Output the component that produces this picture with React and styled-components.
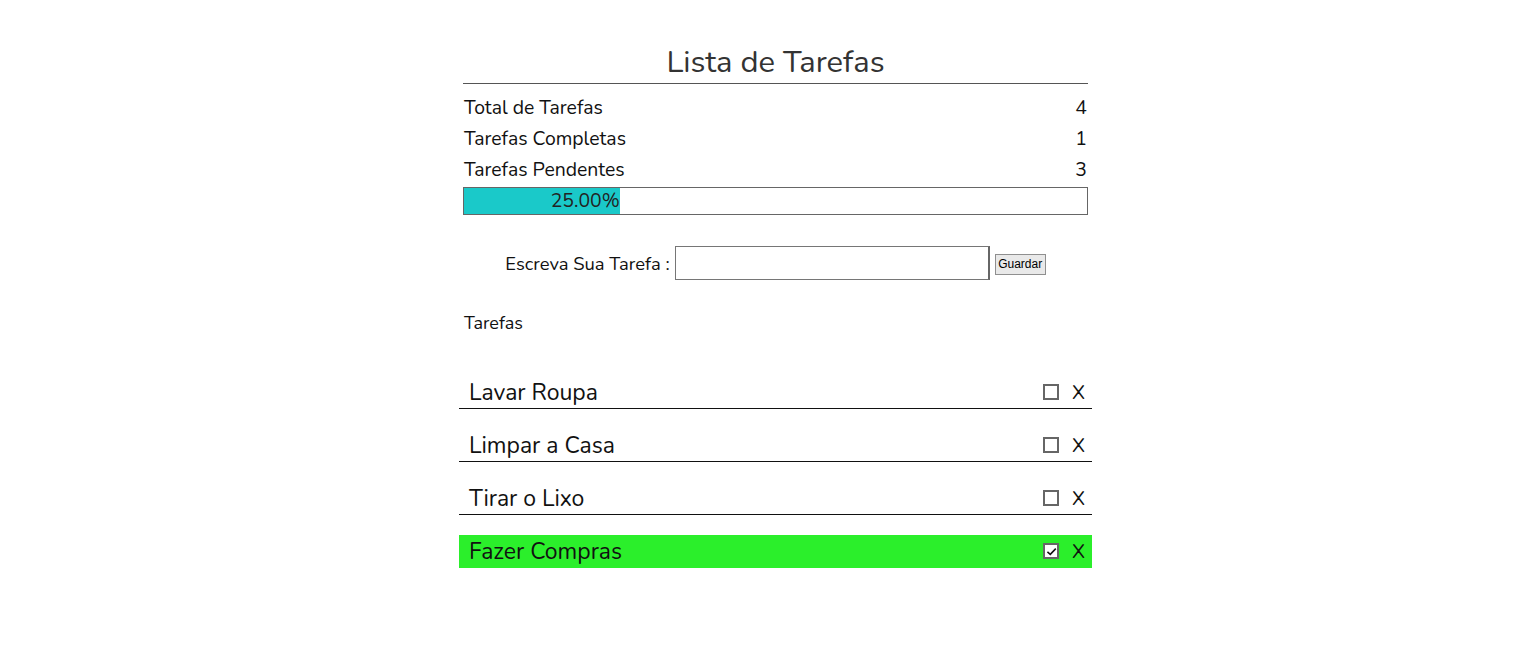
import React, { useState } from "react";
import styled, { createGlobalStyle } from "styled-components";

const Global = createGlobalStyle`
  html, body { margin: 0; padding: 0; background: #fff; }
  body { font-family: "Nunito", "Lato", "Noto Sans", sans-serif; color: #111; }
`;

const Page = styled.div`
  display: flex;
  justify-content: center;
  padding: 42px 0 0 17px;
`;

const Column = styled.div`
  width: 633px;
  display: flex;
  flex-direction: column;
  align-items: center;
`;

const Panel = styled.div`
  width: 625px;
  display: flex;
  flex-direction: column;
`;

const Title = styled.h1`
  margin: 0;
  font-size: 31px;
  font-weight: 400;
  line-height: 41px;
  color: #333;
  text-align: center;
  border-bottom: 1px solid #555;
  padding-bottom: 0;
`;

const Stats = styled.div`
  margin-top: 8px;
  display: flex;
  flex-direction: column;
`;

const StatRow = styled.div`
  display: flex;
  justify-content: space-between;
  font-size: 19.4px;
  line-height: 31px;
  padding: 0 1px;
`;

const Progress = styled.div`
  margin-top: 2px;
  height: 26px;
  border: 1px solid #666;
  display: flex;
`;

const Fill = styled.div`
  background: #1ac9c9;
  height: 100%;
  font-size: 19.4px;
  line-height: 26px;
  text-align: right;
  color: #222;
  white-space: nowrap;
`;

const Form = styled.form`
  margin-top: 31px;
  display: flex;
  align-items: center;
  justify-content: center;
  gap: 5px;
`;

const Label = styled.label`
  font-size: 18.4px;
  color: #111;
`;

const Input = styled.input`
  width: 310px;
  height: 30px;
  border: 1px solid #767676;
  border-right: 2px solid #666;
  padding: 1px;
  box-sizing: content-box;
  outline: none;
`;

const Button = styled.button`
  width: 51px;
  height: 21px;
  font-family: "Liberation Sans", Arial, sans-serif;
  font-size: 12px;
  padding: 0;
  background: #e9e9e9;
  border: 1px solid #8f8f8f;
  border-radius: 0;
  color: #000;
  margin-top: 2px;
`;

const SectionLabel = styled.div`
  margin-top: 31px;
  font-size: 18px;
  line-height: 24px;
  padding-left: 1px;
`;

const List = styled.ul`
  list-style: none;
  margin: 41px 0 0;
  padding: 0;
  width: 633px;
  display: flex;
  flex-direction: column;
  gap: 20px;
`;

const Item = styled.li`
  height: 32px;
  display: flex;
  align-items: center;
  padding: 0 7px 0 10px;
  background: ${(p) => (p.$done ? "#2bef2b" : "transparent")};
  border-bottom: 1px solid ${(p) => (p.$done ? "#2bef2b" : "#111")};
`;

const ItemText = styled.span`
  flex: 1;
  font-size: 23px;
  color: #111;
`;

const Check = styled.span`
  width: 12px;
  height: 12px;
  border: 2px solid #666;
  background: #fff;
  display: inline-flex;
  align-items: center;
  justify-content: center;
  margin-right: 13px;
`;

const Remove = styled.span`
  font-size: 20px;
  color: #111;
  cursor: pointer;
`;

const tasks = [
  { name: "Lavar Roupa", done: false },
  { name: "Limpar a Casa", done: false },
  { name: "Tirar o Lixo", done: false },
  { name: "Fazer Compras", done: true },
];

export default function App() {
  const [value, setValue] = useState("");
  const total = tasks.length;
  const done = tasks.filter((t) => t.done).length;
  const pct = (done / total) * 100;
  return (
    <>
      <Global />
      <Page>
        <Column>
          <Panel>
            <Title>Lista de Tarefas</Title>
            <Stats>
              <StatRow><span>Total de Tarefas</span><span>{total}</span></StatRow>
              <StatRow><span>Tarefas Completas</span><span>{done}</span></StatRow>
              <StatRow><span>Tarefas Pendentes</span><span>{total - done}</span></StatRow>
            </Stats>
            <Progress>
              <Fill style={{ width: `${pct}%` }}>{pct.toFixed(2)}%</Fill>
            </Progress>
            <Form onSubmit={(e) => e.preventDefault()}>
              <Label>Escreva Sua Tarefa :</Label>
              <Input value={value} onChange={(e) => setValue(e.target.value)} />
              <Button type="submit">Guardar</Button>
            </Form>
            <SectionLabel>Tarefas</SectionLabel>
          </Panel>
          <List>
            {tasks.map((t) => (
              <Item key={t.name} $done={t.done}>
                <ItemText>{t.name}</ItemText>
                <Check>
                  {t.done && (
                    <svg width="11" height="11" viewBox="0 0 10 10">
                      <path d="M1.3 5.3 L3.9 7.6 L8.9 2.4" fill="none" stroke="#111" strokeWidth="1.4" />
                    </svg>
                  )}
                </Check>
                <Remove>X</Remove>
              </Item>
            ))}
          </List>
        </Column>
      </Page>
    </>
  );
}
